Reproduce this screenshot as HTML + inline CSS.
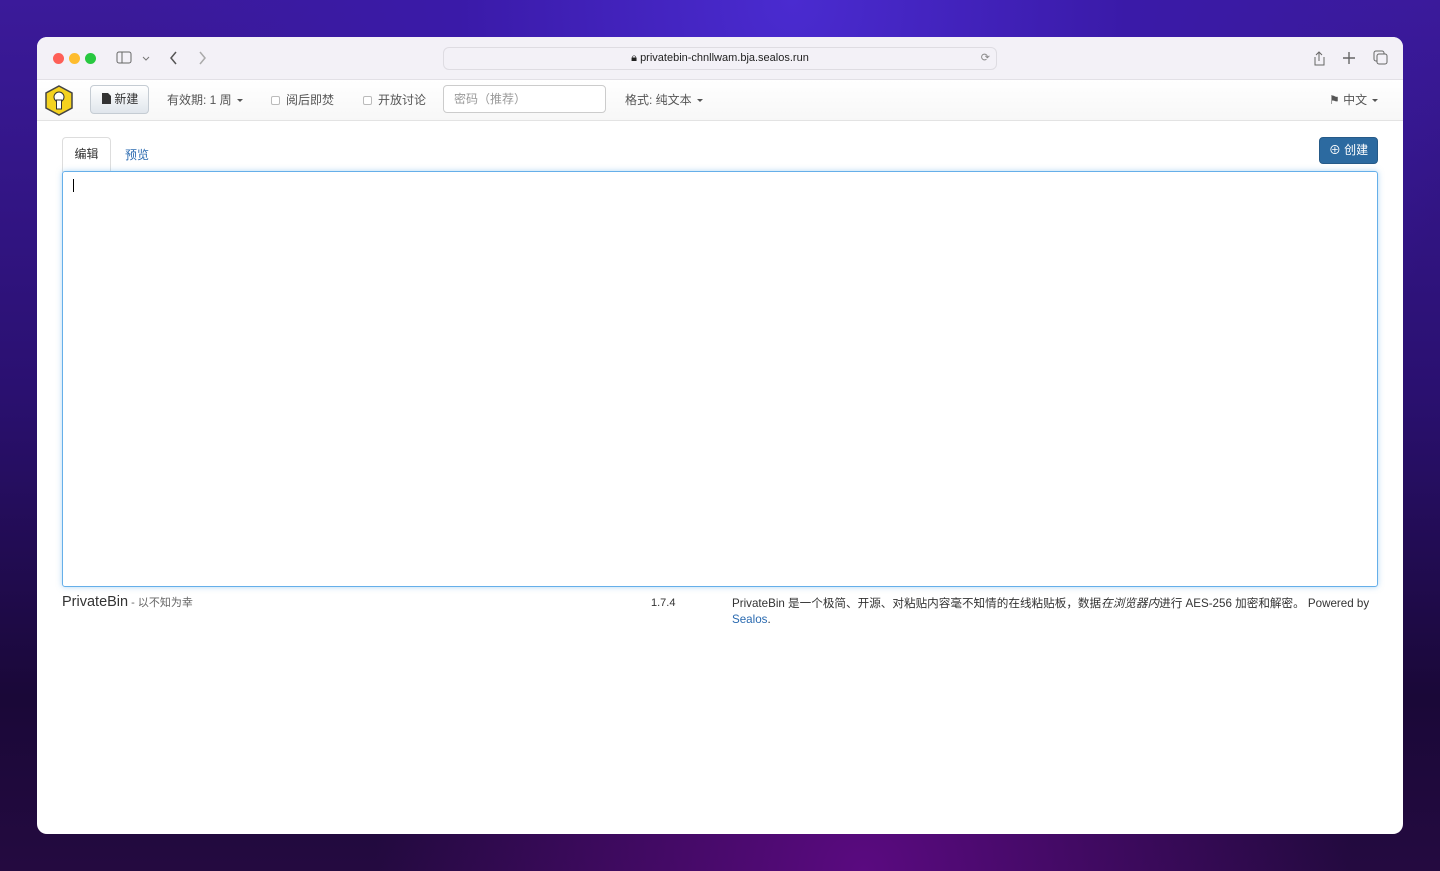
<!DOCTYPE html>
<html><head><meta charset="utf-8"><style>
*{box-sizing:border-box;margin:0;padding:0}
body{width:1440px;height:871px;overflow:hidden;font-family:"Liberation Sans","Noto Sans CJK SC",sans-serif;font-size:12px;color:#333;
background:radial-gradient(ellipse at 55% 0%,#4a2bd0 0%,#3a1aa8 30%,transparent 60%),radial-gradient(ellipse at 60% 100%,#5a0a80 0%,transparent 40%),linear-gradient(180deg,#3b1a9a 0%,#2a1070 45%,#1a0838 80%,#240a40 100%);position:relative}
.win{position:absolute;left:37px;top:37px;width:1366px;height:797px;background:#fff;border-radius:10px;overflow:hidden}
.tb{height:43px;background:#f3f1f7;border-bottom:1px solid #e2e0e6;position:relative}
.dot{position:absolute;top:16px;width:11px;height:11px;border-radius:50%}
.url{position:absolute;left:406px;top:10px;width:554px;height:23px;border:1px solid #dedce2;border-radius:6px;background:#f3f1f7;text-align:center;line-height:21px;font-size:11px;color:#222}
.nav{height:41px;background:linear-gradient(#fff,#f7f7f7);border-bottom:1px solid #e3e3e3;position:relative}
.nav>*{position:absolute}
.btn{left:53px;top:5px;width:59px;height:29px;border:1px solid #c5ccd3;border-radius:4px;background:linear-gradient(#fff,#e0e6ec);line-height:27px;padding-left:11px;color:#333}
.t{top:11px;color:#555}
.cb{display:inline-block;width:9px;height:9px;border:1px solid #bbb;border-radius:2px;margin-right:6px;vertical-align:-1px;background:#fff}
.car{display:inline-block;border-left:3px solid transparent;border-right:3px solid transparent;border-top:3px solid #555;vertical-align:2px;margin-left:5px}
.pw{left:406px;top:5px;width:163px;height:28px;border:1px solid #ccc;border-radius:4px;background:#fff;color:#999;padding-left:10px;line-height:26px}
.tab{position:absolute;left:25px;top:100px;width:49px;height:35px;border:1px solid #ddd;border-bottom:none;border-radius:4px 4px 0 0;line-height:32px;text-align:center;background:#fff}
.ta{position:absolute;left:25px;top:134px;width:1316px;height:416px;border:1px solid #66afe9;border-radius:3px;box-shadow:0 0 6px rgba(102,175,233,.5)}
.create{position:absolute;left:1282px;top:100px;width:59px;height:27px;background:#2c6aa0;border:1px solid #265a88;border-radius:4px;color:#fff;line-height:25px;text-align:center}
.foot{position:absolute;top:558px;font-size:11px}
</style></head><body>
<div class="win">
 <div class="tb">
  <div class="dot" style="left:16px;background:#fe5f57"></div><div class="dot" style="left:32px;background:#febc2e"></div><div class="dot" style="left:48px;background:#28c840"></div>
  <svg style="position:absolute;left:79px;top:14px" width="40" height="14"><rect x="1" y="1" width="14" height="11" rx="2" fill="none" stroke="#666"/><line x1="6" y1="1" x2="6" y2="12" stroke="#666"/><path d="M27 6l3 3 3-3" fill="none" stroke="#777"/></svg>
  <svg style="position:absolute;left:130px;top:13px" width="45" height="16"><path d="M9 2l-5 6 5 6" fill="none" stroke="#555" stroke-width="1.5"/><path d="M33 2l5 6-5 6" fill="none" stroke="#aaa" stroke-width="1.5"/></svg>
  <div class="url">🔒︎ privatebin-chnllwam.bja.sealos.run<span style="position:absolute;right:6px;color:#888">⟳</span></div>
  <svg style="position:absolute;left:1274px;top:11px" width="80" height="20"><path d="M8 4v9M5 7l3-3 3 3M4 9v8h9V9" fill="none" stroke="#666"/><path d="M38 4v12M32 10h12" stroke="#666" stroke-width="1.4"/><rect x="63" y="3" width="10" height="10" rx="2" fill="none" stroke="#666"/><rect x="66" y="6" width="10" height="10" rx="2" fill="#f3f1f7" stroke="#666"/></svg>
 </div>
 <div class="nav">
  <svg style="left:7px;top:5px" width="30" height="31"><polygon points="15,1 28,8 28,23 15,30 2,23 2,8" fill="#f4d21f" stroke="#444" stroke-width="1.5"/><circle cx="15" cy="12" r="5" fill="#fff" stroke="#333"/><rect x="12.5" y="15" width="5" height="9" fill="#fff" stroke="#333"/></svg>
  <div class="btn"><svg width="9" height="11" style="vertical-align:-1px"><path d="M0 0h6l3 3v8H0z" fill="#333"/></svg> 新建</div>
  <div class="t" style="left:130px">有效期: 1 周<span class="car"></span></div>
  <div class="t" style="left:234px"><span class="cb"></span>阅后即焚</div>
  <div class="t" style="left:326px"><span class="cb"></span>开放讨论</div>
  <div class="pw">密码（推荐）</div>
  <div class="t" style="left:588px">格式: 纯文本<span class="car"></span></div>
  <div class="t" style="left:1292px">⚑ 中文<span class="car"></span></div>
 </div>
 <div class="tab">编辑</div>
 <div style="position:absolute;left:88px;top:109px;color:#2a6ab0">预览</div>
 <div class="create">⊕ 创建</div>
 <div class="ta"><div style="position:absolute;left:10px;top:7px;width:1px;height:13px;background:#000"></div></div>
 <div class="foot" style="left:25px;top:557px"><span style="font-size:14.5px;color:#333">PrivateBin</span> <span style="color:#666">- 以不知为幸</span></div>
 <div class="foot" style="left:614px;top:560px">1.7.4</div>
 <div class="foot" style="left:695px;top:559px;line-height:16px;width:660px;font-size:11.6px">PrivateBin 是一个极简、开源、对粘贴内容毫不知情的在线粘贴板，数据<i>在浏览器内</i>进行 AES-256 加密和解密。 Powered by<br><span style="color:#2a6ab0">Sealos</span>.</div>
</div>
</body></html>
